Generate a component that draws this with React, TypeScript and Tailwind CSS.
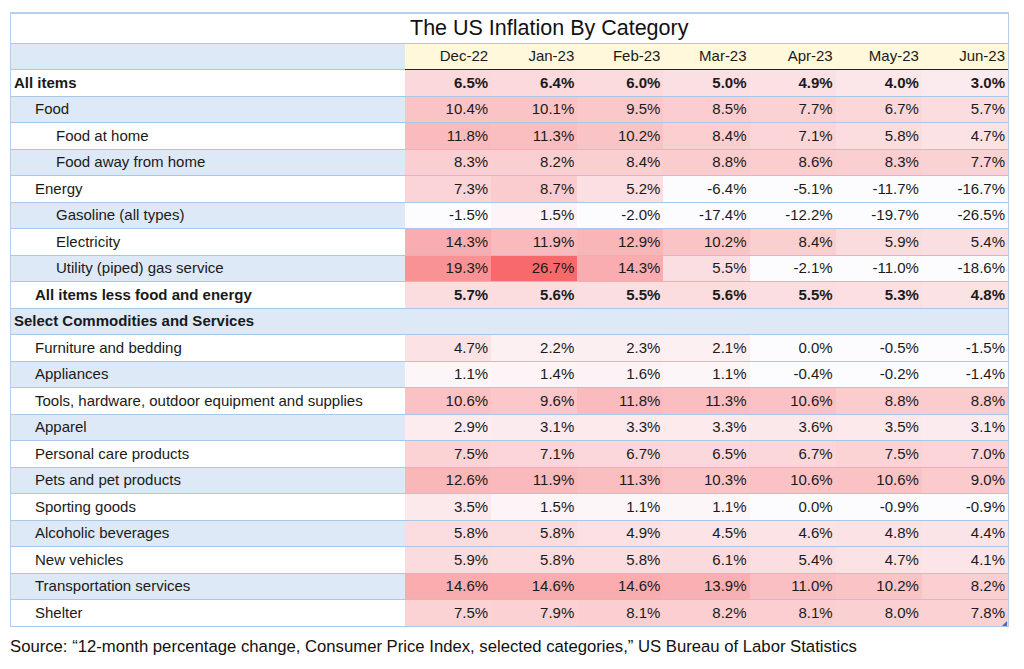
import React from "react";

type Row = {
  label: string;
  level: 0 | 1 | 2;
  bold?: boolean;
  values?: number[];
};

const rows: Row[] = [
  { label: "All items", level: 0, bold: true, values: [6.5, 6.4, 6.0, 5.0, 4.9, 4.0, 3.0] },
  { label: "Food", level: 1, values: [10.4, 10.1, 9.5, 8.5, 7.7, 6.7, 5.7] },
  { label: "Food at home", level: 2, values: [11.8, 11.3, 10.2, 8.4, 7.1, 5.8, 4.7] },
  { label: "Food away from home", level: 2, values: [8.3, 8.2, 8.4, 8.8, 8.6, 8.3, 7.7] },
  { label: "Energy", level: 1, values: [7.3, 8.7, 5.2, -6.4, -5.1, -11.7, -16.7] },
  { label: "Gasoline (all types)", level: 2, values: [-1.5, 1.5, -2.0, -17.4, -12.2, -19.7, -26.5] },
  { label: "Electricity", level: 2, values: [14.3, 11.9, 12.9, 10.2, 8.4, 5.9, 5.4] },
  { label: "Utility (piped) gas service", level: 2, values: [19.3, 26.7, 14.3, 5.5, -2.1, -11.0, -18.6] },
  { label: "All items less food and energy", level: 1, bold: true, values: [5.7, 5.6, 5.5, 5.6, 5.5, 5.3, 4.8] },
  { label: "Select Commodities and Services", level: 0, bold: true },
  { label: "Furniture and bedding", level: 1, values: [4.7, 2.2, 2.3, 2.1, 0.0, -0.5, -1.5] },
  { label: "Appliances", level: 1, values: [1.1, 1.4, 1.6, 1.1, -0.4, -0.2, -1.4] },
  { label: "Tools, hardware, outdoor equipment and supplies", level: 1, values: [10.6, 9.6, 11.8, 11.3, 10.6, 8.8, 8.8] },
  { label: "Apparel", level: 1, values: [2.9, 3.1, 3.3, 3.3, 3.6, 3.5, 3.1] },
  { label: "Personal care products", level: 1, values: [7.5, 7.1, 6.7, 6.5, 6.7, 7.5, 7.0] },
  { label: "Pets and pet products", level: 1, values: [12.6, 11.9, 11.3, 10.3, 10.6, 10.6, 9.0] },
  { label: "Sporting goods", level: 1, values: [3.5, 1.5, 1.1, 1.1, 0.0, -0.9, -0.9] },
  { label: "Alcoholic beverages", level: 1, values: [5.8, 5.8, 4.9, 4.5, 4.6, 4.8, 4.4] },
  { label: "New vehicles", level: 1, values: [5.9, 5.8, 5.8, 6.1, 5.4, 4.7, 4.1] },
  { label: "Transportation services", level: 1, values: [14.6, 14.6, 14.6, 13.9, 11.0, 10.2, 8.2] },
  { label: "Shelter", level: 1, values: [7.5, 7.9, 8.1, 8.2, 8.1, 8.0, 7.8] },
];

const months = ["Dec-22", "Jan-23", "Feb-23", "Mar-23", "Apr-23", "May-23", "Jun-23"];

function heat(v: number): string {
  const t = Math.max(0, Math.min(1, v / 26.7));
  const r = Math.round(252 + (248 - 252) * t);
  const g = Math.round(252 + (105 - 252) * t);
  const b = Math.round(255 + (107 - 255) * t);
  return `rgb(${r},${g},${b})`;
}

const padByLevel = ["pl-[3px]", "pl-[24px]", "pl-[45px]"];

export default function App() {
  return (
    <div
      className="w-[1024px] h-[669px] bg-white pt-[12px] pl-[10px] text-[#1a1a1a]"
      style={{ fontFamily: '"Liberation Sans", Arial, sans-serif' }}
    >
      <div className="relative w-[999px] border-t-2 border-l border-r border-[#b4cfec]">
        {/* Title row */}
        <div className="grid grid-cols-[394px_repeat(7,1fr)] h-[30px] border-b border-[#a9c7e8] bg-white">
          <div />
          <div className="col-span-7 flex items-center pl-[5px] text-[21.5px] leading-none text-[#111]">
            The US Inflation By Category
          </div>
        </div>
        {/* Header row */}
        <div className="grid grid-cols-[394px_repeat(7,1fr)] h-[26px]">
          <div className="bg-[#dde9f6] border-b border-[#a9c7e8]" />
          {months.map((m) => (
            <div
              key={m}
              className="bg-[#fff8da] border-b border-[#222] flex items-center justify-end pr-[3px] text-[15px] text-[#1a1a1a]"
            >
              {m}
            </div>
          ))}
        </div>
        {/* Data rows */}
        {rows.map((r, i) => {
          const banded = i % 2 === 1;
          const labelBg = banded ? "bg-[#dde9f6]" : "bg-white";
          return (
            <div
              key={r.label}
              className={`grid grid-cols-[394px_repeat(7,1fr)] h-[26.52px] border-b border-[#a9c7e8] text-[15px] ${
                r.bold ? "font-bold" : ""
              }`}
            >
              <div className={`${labelBg} ${padByLevel[r.level]} flex items-center`}>
                {r.label}
              </div>
              {r.values
                ? r.values.map((v, j) => (
                    <div
                      key={j}
                      className="flex items-center justify-end pr-[3px]"
                      style={{ backgroundColor: heat(v) }}
                    >
                      {v.toFixed(1)}%
                    </div>
                  ))
                : months.map((m) => <div key={m} className={labelBg} />)}
            </div>
          );
        })}
        <div className="absolute right-[1px] bottom-[1px] w-0 h-0 border-l-[5px] border-l-transparent border-b-[5px] border-b-[#3b6fc4]" />
      </div>
      <div className="mt-[11px] text-[16.7px] leading-[18px] text-[#111]">
        Source: “12-month percentage change, Consumer Price Index, selected categories,” US Bureau of Labor Statistics
      </div>
    </div>
  );
}
